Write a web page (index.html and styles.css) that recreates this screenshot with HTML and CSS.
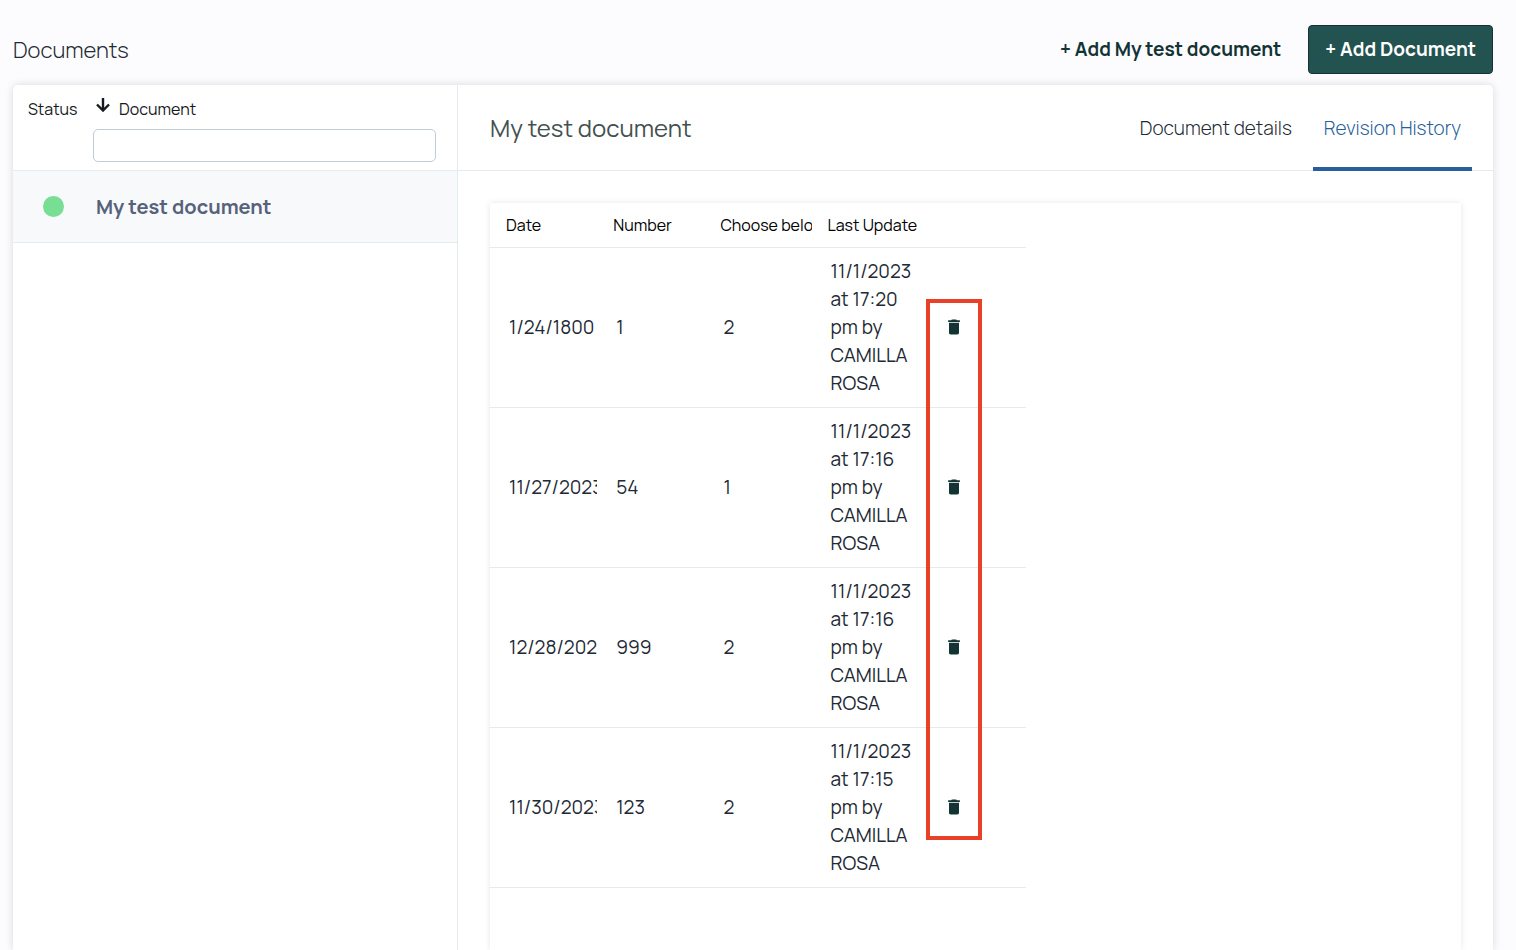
FILE: index.html
```html
<!DOCTYPE html>
<html lang="en">
<head>
  <meta charset="UTF-8" />
  <meta name="viewport" content="width=device-width, initial-scale=1.0" />
  <title>Documents</title>
  <link rel="stylesheet" href="styles.css">
</head>
<body>

  <!-- Shared icons -->
  <svg class="sprite" aria-hidden="true">
    <symbol id="icon-trash" viewBox="0 0 24 24">
      <path d="M6 19c0 1.100.9 2 2 2h8c1.100 0 2-.9 2-2V7H6v12zM19 4h-3.500l-1-1h-5l-1 1H5v2h14V4z" />
    </symbol>
  </svg>

  <header class="page-header">
    <h1>Documents</h1>
    <div class="actions">
      <button class="btn btn-link">+ Add My test document</button>
      <button class="btn btn-primary">+ Add Document</button>
    </div>
  </header>

  <main class="panel">
    <!-- Document list -->
    <aside class="sidebar">
      <div class="list-header">
        <span class="status-label">Status</span>
        <div class="document-filter">
          <label for="filter">
            <svg class="sort-icon" viewBox="0 0 14 14" aria-hidden="true">
              <path d="M7 0v12M1 6.500l6 6 6-6" />
            </svg>
            Document
          </label>
          <input type="text" id="filter" />
        </div>
      </div>
      <a class="list-item" href="#">
        <span class="dot"></span>
        <span>My test document</span>
      </a>
    </aside>

    <!-- Selected document -->
    <section class="detail">
      <div class="detail-header">
        <h2>My test document</h2>
        <nav class="tabs">
          <a class="tab" href="#">Document details</a>
          <a class="tab active" href="#">Revision History</a>
        </nav>
      </div>

      <div class="card">
        <table class="history">
          <thead>
            <tr>
              <th>Date</th>
              <th>Number</th>
              <th>Choose below</th>
              <th>Last Update</th>
              <th></th>
            </tr>
          </thead>
          <tbody>
            <tr>
              <td>1/24/1800</td>
              <td>1</td>
              <td>2</td>
              <td class="updated">11/1/2023 at 17:20 pm by CAMILLA ROSA</td>
              <td><button class="delete" aria-label="Delete"><svg><use href="#icon-trash" /></svg></button></td>
            </tr>
            <tr>
              <td>11/27/2023</td>
              <td>54</td>
              <td>1</td>
              <td class="updated">11/1/2023 at 17:16 pm by CAMILLA ROSA</td>
              <td><button class="delete" aria-label="Delete"><svg><use href="#icon-trash" /></svg></button></td>
            </tr>
            <tr>
              <td>12/28/2023</td>
              <td>999</td>
              <td>2</td>
              <td class="updated">11/1/2023 at 17:16 pm by CAMILLA ROSA</td>
              <td><button class="delete" aria-label="Delete"><svg><use href="#icon-trash" /></svg></button></td>
            </tr>
            <tr>
              <td>11/30/2023</td>
              <td>123</td>
              <td>2</td>
              <td class="updated">11/1/2023 at 17:15 pm by CAMILLA ROSA</td>
              <td><button class="delete" aria-label="Delete"><svg><use href="#icon-trash" /></svg></button></td>
            </tr>
          </tbody>
        </table>
        <div class="highlight"></div>
      </div>
    </section>
  </main>

</body>
</html>
```

FILE: styles.css
```css
* {
  box-sizing: border-box;
}

body {
  font-family: Manrope, Inter, sans-serif;
  font-size: 19px;
  margin: 0;
  height: 100vh;
  overflow: hidden;
  display: flex;
  flex-direction: column;
  padding: 25px 23px 0 13px;
  background-color: #fcfcfe;
  color: #212934;
}

h1,
h2 {
  margin: 0;
  font-weight: 400;
}

a {
  color: inherit;
  text-decoration: none;
}

.sprite {
  display: none;
}

.page-header {
  display: flex;
  justify-content: space-between;
  align-items: center;
  padding-bottom: 11px;
}

h1 {
  font-size: 22px;
  font-weight: 300;
}

.actions {
  display: flex;
  gap: 10px;
}

.btn {
  font-family: inherit;
  font-size: 19px;
  font-weight: 700;
  height: 49px;
  padding: 0 16px 2px;
  border: 1px solid transparent;
  border-radius: 4px;
  cursor: pointer;
}

.btn-link {
  background: none;
  color: #133335;
}

.btn-primary {
  background-color: #225351;
  border-color: #133335;
  color: white;
}

.panel {
  flex: 1;
  display: flex;
  background: white;
  border-radius: 5px 5px 0 0;
  box-shadow: 0 0 8px rgba(0,0,0,0.14);
}

.sidebar {
  width: 445px;
  flex-shrink: 0;
  border-right: 1px solid #e4ecef;
}

.list-header {
  display: flex;
  height: 86px;
  padding: 12px 21px 0 15px;
  border-bottom: 1px solid #e4ecef;
  font-size: 16px;
  line-height: 24px;
  color: #16191d;
}

.status-label {
  width: 65px;
}

.document-filter {
  flex: 1;
}

.document-filter label {
  display: flex;
  gap: 9px;
  padding-left: 3px;
}

.sort-icon {
  width: 14px;
  height: 14px;
  margin-top: 1px;
  fill: none;
  stroke: #16191d;
  stroke-width: 2.4;
}

.document-filter input {
  display: block;
  width: 100%;
  height: 33px;
  margin-top: 8px;
  padding: 0 8px;
  border: 1px solid #c2ccd6;
  border-radius: 5px;
  font: inherit;
}

.list-item {
  display: flex;
  align-items: center;
  gap: 32px;
  height: 72px;
  padding-left: 30px;
  background-color: #f7f9fb;
  border-bottom: 1px solid #e4ecef;
  color: #56627a;
  font-size: 20px;
  font-weight: 700;
}

.dot {
  width: 21px;
  height: 21px;
  border-radius: 50%;
  background-color: #78de93;
}

.detail {
  flex: 1;
  display: flex;
  flex-direction: column;
}

.detail-header {
  display: flex;
  justify-content: space-between;
  height: 86px;
  padding: 0 21px 0 32px;
  border-bottom: 1px solid #e4ecef;
  line-height: 86px;
}

h2 {
  font-size: 24px;
  color: #44504f;
}

.tabs {
  display: flex;
  gap: 10px;
}

.tab {
  height: 86px;
  padding: 0 11px;
  font-weight: 300;
}

.tab.active {
  color: #285e9b;
  border-bottom: 4px solid #285e9b;
}

.card {
  position: relative;
  flex: 1;
  margin: 32px 32px 0;
  box-shadow: 0 0 6px rgba(0,0,0,0.1);
}

.history {
  width: 536px;
  table-layout: fixed;
  border-collapse: collapse;
}

th,
td {
  padding: 0 0 0 19px;
  border-bottom: 1px solid #e8e9ea;
  text-align: left;
  white-space: nowrap;
  overflow: hidden;
}

th {
  height: 44px;
  padding-left: 16px;
  font-size: 16px;
  font-weight: 400;
  color: #000;
}

td {
  height: 160px;
  line-height: 28px;
}

td.updated {
  padding-right: 4px;
  white-space: normal;
}

.delete {
  display: block;
  margin-left: 6px;
  padding: 0;
  border: none;
  background: none;
  cursor: pointer;
}

.delete svg {
  display: block;
  width: 20px;
  height: 20px;
  fill: #133335;
}

/* Marks the delete column */
.highlight {
  position: absolute;
  top: 96px;
  left: 436px;
  width: 56px;
  height: 541px;
  border: 4px solid #e94128;
  pointer-events: none;
}
```
